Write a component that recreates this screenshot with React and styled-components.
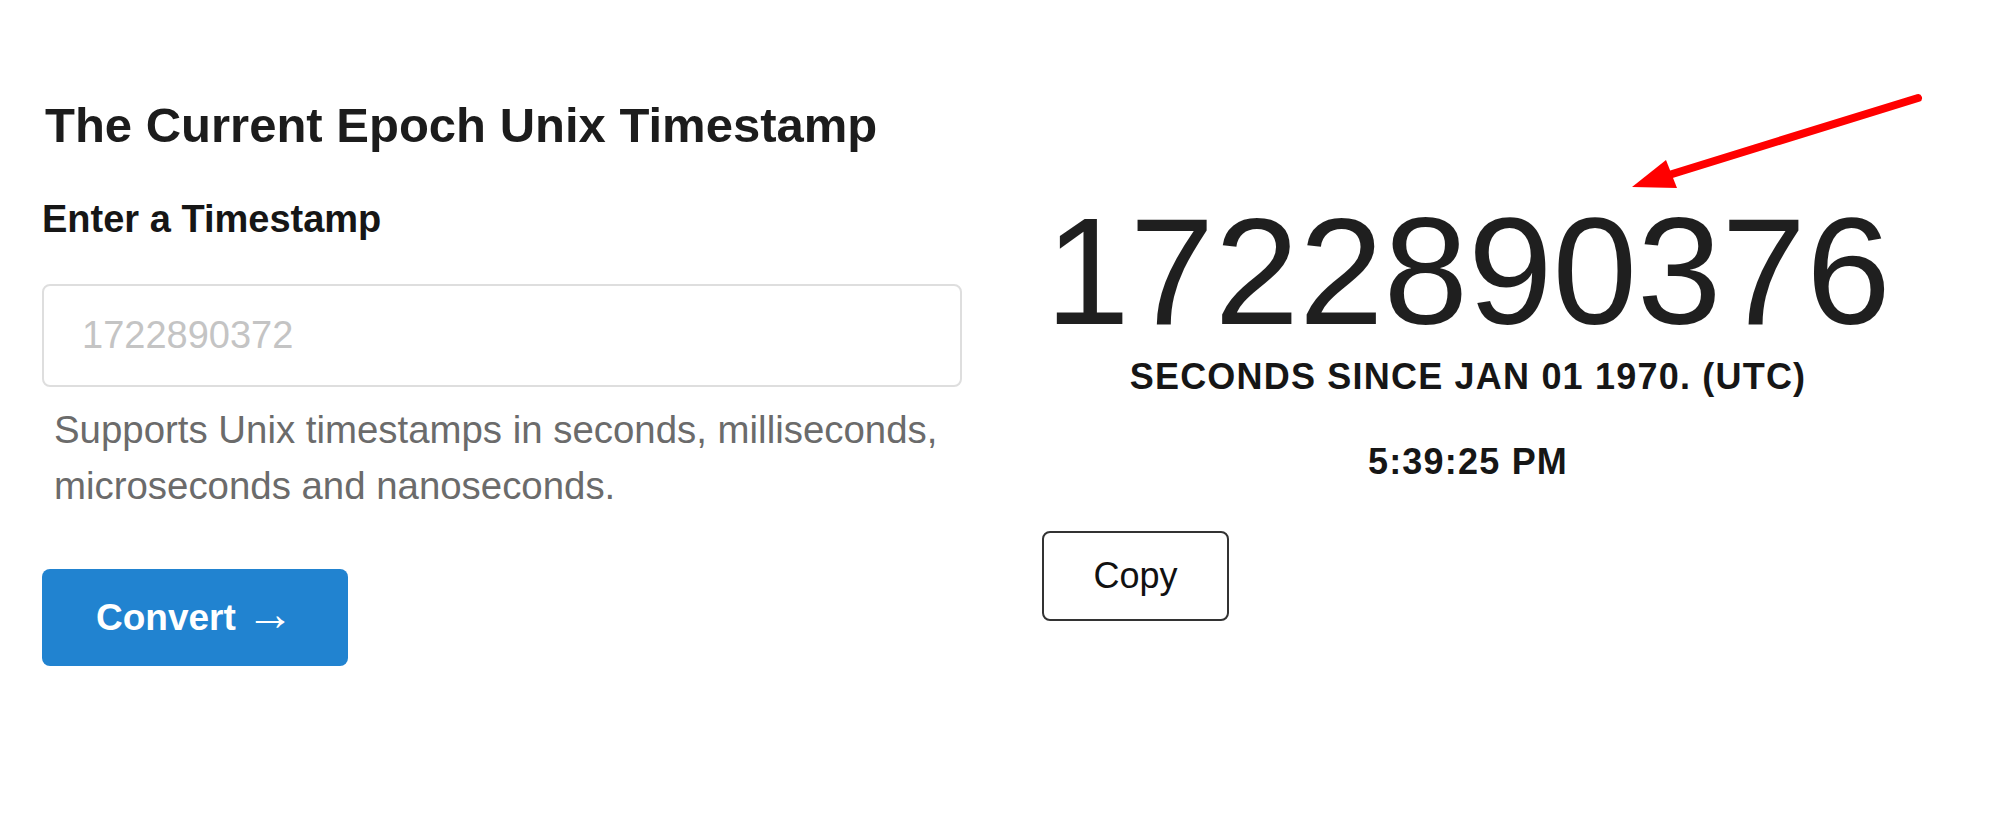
import React from "react";
import styled, { createGlobalStyle } from "styled-components";

const GlobalStyle = createGlobalStyle`
  * {
    box-sizing: border-box;
  }
  html,
  body {
    margin: 0;
    padding: 0;
    background: #fff;
  }
  body {
    font-family: "Liberation Sans", Arial, sans-serif;
    color: #1c1c1c;
  }
`;

function App() {
  return (
    <Page>
      <GlobalStyle />
      <Title>The Current Epoch Unix Timestamp</Title>
      <Columns>
        {/* converter form */}
        <Form>
          <Label htmlFor="ts">Enter a Timestamp</Label>
          <Input id="ts" type="text" placeholder="1722890372" />
          <Help>
            Supports Unix timestamps in seconds, milliseconds, microseconds and
            nanoseconds.
          </Help>
          <PrimaryButton>
            Convert <Arrow>→</Arrow>
          </PrimaryButton>
        </Form>

        {/* live clock */}
        <Clock>
          <Epoch>1722890376</Epoch>
          <Caption>SECONDS SINCE JAN 01 1970. (UTC)</Caption>
          <Caption $gap="42px">5:39:25 PM</Caption>
          <CopyButton>Copy</CopyButton>
        </Clock>
      </Columns>

      <Pointer viewBox="0 0 300 110" width="300" height="110">
        <line
          x1="293"
          y1="8"
          x2="44"
          y2="85"
          stroke="#ff0000"
          strokeWidth="8"
          strokeLinecap="round"
        />
        <polygon points="7,97 41,70 52,98" fill="#ff0000" />
      </Pointer>
    </Page>
  );
}

const Page = styled.main`
  position: relative;
  width: 2000px;
  height: 815px;
  padding: 95px 0 0 42px;
  overflow: hidden;
`;

const Title = styled.h1`
  margin: 0 0 41px 3px;
  font-size: 49px;
  line-height: 60px;
  font-weight: 700;
  color: #1c1c1c;
`;

const Columns = styled.div`
  display: grid;
  grid-template-columns: 920px 852px;
  column-gap: 80px;
  align-items: start;
`;

const Form = styled.section`
  display: flex;
  flex-direction: column;
  align-items: flex-start;
`;

const Label = styled.label`
  font-size: 38px;
  line-height: 46px;
  font-weight: 700;
  color: #161616;
  margin-bottom: 42px;
`;

const Input = styled.input`
  width: 920px;
  height: 103px;
  padding: 0 38px;
  border: 2px solid #dedede;
  border-radius: 8px;
  font-family: inherit;
  font-size: 38px;
  color: #333;
  outline: none;
  &::placeholder {
    color: #c4c4c4;
  }
`;

const Help = styled.p`
  margin: 15px 0 0;
  padding-left: 12px;
  font-size: 38.4px;
  line-height: 56px;
  color: #6b6b6b;
`;

const PrimaryButton = styled.button`
  margin-top: 55px;
  width: 306px;
  height: 97px;
  border: none;
  border-radius: 8px;
  background: #2183d0;
  color: #fff;
  font-family: inherit;
  font-size: 37px;
  font-weight: 700;
  cursor: pointer;
`;

const Arrow = styled.span`
  font-weight: 400;
  font-size: 48px;
  line-height: 0;
`;

const Clock = styled.section`
  display: flex;
  flex-direction: column;
  align-items: center;
`;

const Epoch = styled.div`
  font-size: 152px;
  line-height: 150px;
  color: #1f1f1f;
`;

const Caption = styled.div`
  margin-top: ${(p) => p.$gap || "9px"};
  font-size: 36px;
  line-height: 43px;
  font-weight: 700;
  letter-spacing: 1.2px;
  color: #161616;
`;

const CopyButton = styled.button`
  align-self: flex-start;
  margin-top: 48px;
  width: 187px;
  height: 90px;
  border: 2px solid #333;
  border-radius: 8px;
  background: #fff;
  color: #111;
  font-family: inherit;
  font-size: 36px;
  cursor: pointer;
`;

const Pointer = styled.svg`
  position: absolute;
  left: 1625px;
  top: 90px;
`;

export default App;
